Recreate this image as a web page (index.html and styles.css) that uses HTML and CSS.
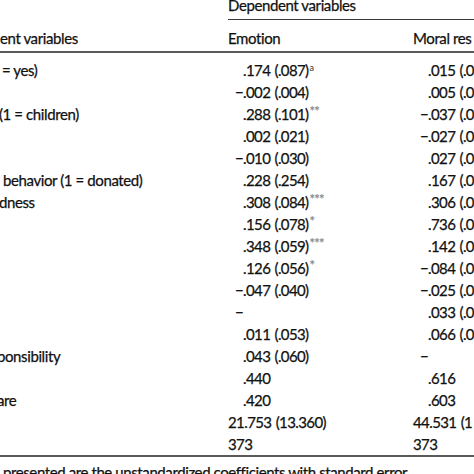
FILE: index.html
```html
<!DOCTYPE html>
<html>
<head>
<meta charset="utf-8">
<link rel="stylesheet" href="styles.css">
</head>
<body>
<div class="table">
  <div class="cell"></div>
  <div class="cell group">Dependent variables</div>

  <div class="cell head">ent variables</div>
  <div class="cell head col">Emotion</div>
  <div class="cell head col">Moral res</div>

  <div class="body">
    <div class="lab ind2">= yes)</div>
    <div class="val"><span class="int"></span>.174 (.087)<sup class="a">a</sup></div>
    <div class="val"><span class="int"></span>.015 (.0</div>

    <div class="lab"></div>
    <div class="val"><span class="int">−</span>.002 (.004)</div>
    <div class="val"><span class="int"></span>.005 (.0</div>

    <div class="lab indn1">(1 = children)</div>
    <div class="val"><span class="int"></span>.288 (.101)<sup>**</sup></div>
    <div class="val"><span class="int">−</span>.037 (.0</div>

    <div class="lab"></div>
    <div class="val"><span class="int"></span>.002 (.021)</div>
    <div class="val"><span class="int">−</span>.027 (.0</div>

    <div class="lab"></div>
    <div class="val"><span class="int">−</span>.010 (.030)</div>
    <div class="val"><span class="int"></span>.027 (.0</div>

    <div class="lab ind3">behavior (1 = donated)</div>
    <div class="val"><span class="int"></span>.228 (.254)</div>
    <div class="val"><span class="int"></span>.167 (.0</div>

    <div class="lab indn1">dness</div>
    <div class="val"><span class="int"></span>.308 (.084)<sup>***</sup></div>
    <div class="val"><span class="int"></span>.306 (.0</div>

    <div class="lab"></div>
    <div class="val"><span class="int"></span>.156 (.078)<sup>*</sup></div>
    <div class="val"><span class="int"></span>.736 (.0</div>

    <div class="lab"></div>
    <div class="val"><span class="int"></span>.348 (.059)<sup>***</sup></div>
    <div class="val"><span class="int"></span>.142 (.0</div>

    <div class="lab"></div>
    <div class="val"><span class="int"></span>.126 (.056)<sup>*</sup></div>
    <div class="val"><span class="int">−</span>.084 (.0</div>

    <div class="lab"></div>
    <div class="val"><span class="int">−</span>.047 (.040)</div>
    <div class="val"><span class="int">−</span>.025 (.0</div>

    <div class="lab"></div>
    <div class="val"><span class="int">−</span></div>
    <div class="val"><span class="int"></span>.033 (.0</div>

    <div class="lab"></div>
    <div class="val"><span class="int"></span>.011 (.053)</div>
    <div class="val"><span class="int"></span>.066 (.0</div>

    <div class="lab indn2">ponsibility</div>
    <div class="val"><span class="int"></span>.043 (.060)</div>
    <div class="val"><span class="int">−</span></div>

    <div class="lab"></div>
    <div class="val"><span class="int"></span>.440</div>
    <div class="val"><span class="int"></span>.616</div>

    <div class="lab indn2">are</div>
    <div class="val"><span class="int"></span>.420</div>
    <div class="val"><span class="int"></span>.603</div>

    <div class="lab"></div>
    <div class="val">21.753 (13.360)</div>
    <div class="val">44.531 (1</div>

    <div class="lab"></div>
    <div class="val">373</div>
    <div class="val">373</div>
  </div>

  <div class="note">presented are the unstandardized coefficients with standard error</div>
</div>
</body>
</html>
```

FILE: styles.css
```css
html, body {
  margin: 0;
  padding: 0;
  background: #ffffff;
  overflow: hidden;
  width: 474px;
  height: 474px;
}

.table {
  display: grid;
  grid-template-columns: 228px 185px 1fr;
  margin-top: -6px;
  font-family: Lato, "Liberation Sans", sans-serif;
  font-size: 15px;
  letter-spacing: -0.4px;
  line-height: 22px;
  color: #111111;
  -webkit-text-stroke: 0.25px #111111;
  white-space: nowrap;
}

.group {
  grid-column: 2 / 4;
  padding-bottom: 3px;
  border-bottom: 1px solid #3a3a3a;
}

.head {
  padding-top: 7px;
  padding-bottom: 2px;
  border-bottom: 2px solid #5a5a5a;
}

.body {
  grid-column: 1 / 4;
  display: grid;
  grid-template-columns: 228px 185px 1fr;
  grid-auto-rows: 22px;
  padding-top: 6px;
  border-bottom: 2px solid #5a5a5a;
}

.lab {
  overflow: hidden;
}

.ind2 { padding-left: 2px; }
.ind3 { padding-left: 3px; }
.indn1 { margin-left: -1px; }
.indn2 { margin-left: -3px; }

.val {
  letter-spacing: -0.6px;
  word-spacing: 1px;
}

.int {
  display: inline-block;
  width: 15px;
  text-align: right;
}

sup {
  font-size: 13px;
  line-height: 0;
  vertical-align: 4px;
  color: #8a8a8a;
  -webkit-text-stroke: 0.2px #8a8a8a;
  margin-left: 1px;
  letter-spacing: -0.8px;
}

sup.a {
  font-size: 9px;
  vertical-align: 5px;
  color: #333;
  -webkit-text-stroke: 0;
}

.note {
  grid-column: 1 / 4;
  padding-top: 4px;
  padding-left: 3px;
}
```
